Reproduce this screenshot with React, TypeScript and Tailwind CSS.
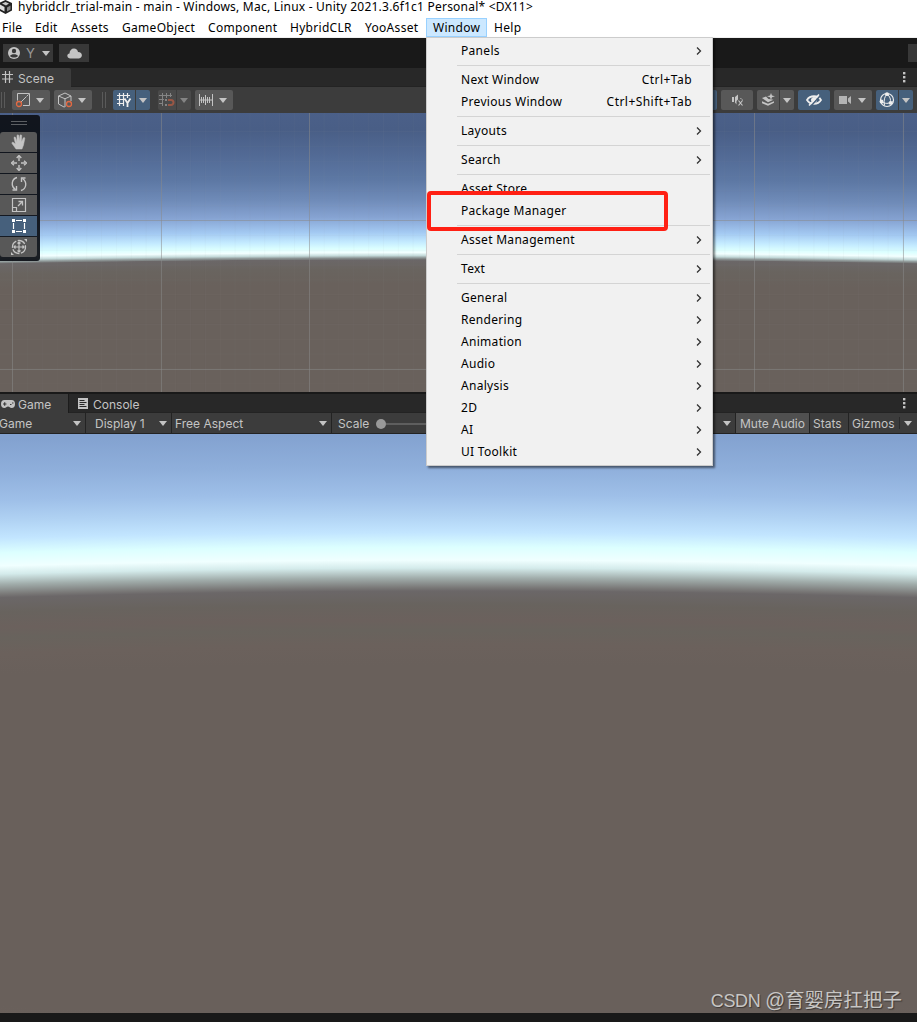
import type { ReactNode } from 'react'
import { clsx } from 'clsx'

type MenuEntry = { label: string; shortcut?: string; sub?: boolean } | null

const MENU_BAR = [
  { label: 'File', width: 'w-[28px] pl-[2px]' },
  { label: 'Edit', width: 'w-[36px] pl-[7px]' },
  { label: 'Assets', width: 'w-[51px] pl-[7px]' },
  { label: 'GameObject', width: 'w-[86px] pl-[7px]' },
  { label: 'Component', width: 'w-[82px] pl-[7px]' },
  { label: 'HybridCLR', width: 'w-[75px] pl-[7px]' },
  { label: 'YooAsset', width: 'w-[68px] pl-[7px]' },
  { label: 'Window', width: 'w-[61px] pl-[6px]', open: true },
  { label: 'Help', width: 'w-[41px] pl-[7px]' },
]

// null is a separator
const WINDOW_MENU: MenuEntry[] = [
  { label: 'Panels', sub: true },
  null,
  { label: 'Next Window', shortcut: 'Ctrl+Tab' },
  { label: 'Previous Window', shortcut: 'Ctrl+Shift+Tab' },
  null,
  { label: 'Layouts', sub: true },
  null,
  { label: 'Search', sub: true },
  null,
  { label: 'Asset Store' },
  { label: 'Package Manager' },
  null,
  { label: 'Asset Management', sub: true },
  null,
  { label: 'Text', sub: true },
  null,
  { label: 'General', sub: true },
  { label: 'Rendering', sub: true },
  { label: 'Animation', sub: true },
  { label: 'Audio', sub: true },
  { label: 'Analysis', sub: true },
  { label: '2D', sub: true },
  { label: 'AI', sub: true },
  { label: 'UI Toolkit', sub: true },
]

function Caret({ className }: { className?: string }) {
  return (
    <svg width="8" height="5" viewBox="0 0 8 5" className={clsx('shrink-0', className)}>
      <path d="M0 0h8L4 5z" fill="currentColor" />
    </svg>
  )
}

function Kebab() {
  return (
    <svg width="4" height="12" viewBox="0 0 4 12" fill="#c4c4c4">
      <rect x="1" y="1" width="2.4" height="2.4" />
      <rect x="1" y="5" width="2.4" height="2.4" />
      <rect x="1" y="9" width="2.4" height="2.4" />
    </svg>
  )
}

function Icon({ children, size = 16 }: { children: ReactNode; size?: number }) {
  return (
    <svg width={size} height={size} viewBox="0 0 16 16" fill="none" stroke="currentColor" className="shrink-0">
      {children}
    </svg>
  )
}

function Grip() {
  return <div className="h-4 w-1 shrink-0 border-x border-[#5a5a5a]" />
}

/* SCENE TOOLBAR BUTTONS */

function ToolButton({ children, className, on }: { children: ReactNode; className?: string; on?: boolean }) {
  return (
    <div
      className={clsx(
        'flex h-5 shrink-0 items-center rounded-[2px]',
        on ? 'bg-[#46607c] text-[#eeeeee]' : 'bg-[#585858] text-[#c4c4c4]',
        className
      )}
    >
      {children}
    </div>
  )
}

function SplitButton({ children, on, dim }: { children: ReactNode; on?: boolean; dim?: boolean }) {
  const bg = on ? 'bg-[#46607c] text-[#eeeeee]' : dim ? 'bg-[#4a4a4a] text-[#848484]' : 'bg-[#585858] text-[#c4c4c4]'
  return (
    <div className="flex h-5 shrink-0 gap-px">
      <div className={clsx('flex items-center justify-center rounded-l-[2px]', dim ? 'w-[18px]' : 'w-[22px]', bg)}>
        {children}
      </div>
      <div className={clsx('flex w-[14px] items-center justify-center rounded-r-[2px]', bg)}>
        <Caret className={on ? 'text-[#c4c4c4]' : ''} />
      </div>
    </div>
  )
}

function SceneToolbar() {
  return (
    <div className="flex h-[26px] shrink-0 items-center justify-between bg-[#3c3c3c]">
      <div className="flex items-center pl-px">
        <Grip />
        <ToolButton className="ml-[7px] w-[38px] justify-between pr-[6px] pl-[3px]">
          <Icon>
            <path d="M2.500 8.500v-7h12v12H8M6 10l5-5M11.500 4.500l2-2" />
            <circle cx="4" cy="12" r="2.500" stroke="#e36a43" strokeWidth="1.300" />
          </Icon>
          <Caret />
        </ToolButton>
        <ToolButton className="ml-1 w-[38px] justify-between pr-[6px] pl-[3px]">
          <Icon>
            <path d="M8.500 14.500L7 15 1.500 12V4L8 1l6 3v5M1.500 4L8 6.800 14 4M8 6.800V14" />
            <circle cx="12" cy="12" r="2.500" stroke="#e36a43" strokeWidth="1.300" />
          </Icon>
          <Caret />
        </ToolButton>
        <div className="mr-[7px] ml-[10px]"><Grip /></div>
        <SplitButton on>
          <Icon>
            <path d="M1 3.500h13M1 7.500h8M1 11.500h7M3.500 1v13M7.500 1v13M11.500 1v5" strokeWidth="1.200" />
            <path d="M8.500 6.500l3 4.500v4M14.500 6.500l-3 4.500" strokeWidth="1.800" />
          </Icon>
        </SplitButton>
        <div className="ml-2">
          <SplitButton dim>
            <Icon>
              <path d="M0 3.500h13M0 7.500h5M0 11.500h4M3.500 1v13M7.500 1v5M11.500 1v4" />
              <path d="M9 8h3a2.500 2.500 0 0 1 0 5H9" stroke="#9a5745" strokeWidth="2" />
              <path d="M6 8h2M6 13h2" strokeWidth="2" />
            </Icon>
          </SplitButton>
        </div>
        <ToolButton className="ml-1 w-[38px] justify-between pr-[6px] pl-[3px]">
          <Icon>
            <path d="M1.500 2v12M14.500 2v12M1 8h14M3.500 5v6M5.500 5v6M7.500 3v10M9.500 5v6M11.500 5v6" />
          </Icon>
          <Caret />
        </ToolButton>
      </div>

      <div className="flex items-center pr-1">
        <ToolButton on className="mr-1 w-[20px]">{null}</ToolButton>
        <ToolButton className="w-8 justify-center">
          <Icon>
            <path d="M3 5h2v5H3zM6 5l3-2.500v5L7.500 9v3.500L6 10.500z" fill="currentColor" stroke="none" />
            <path d="M9.500 8.500l4 5M13.500 8.500l-4 5" strokeWidth="1.200" />
            <path d="M11 6.500c1.500 0 2.500.5 2.500 2" strokeOpacity=".6" />
          </Icon>
        </ToolButton>
        <div className="ml-1">
          <SplitButton>
            <Icon>
              <path d="M2 6l4-1.500L8.500 7l5 .8L8 10.200zM2 9.200l6 2.600 6-2.600v1.600L8 13.800l-6-2.600z" fill="currentColor" stroke="none" />
              <path d="M11 1l1 2.500 3 .8-3 1L11 8l-1-2.700-3-1 3-.8z" fill="currentColor" stroke="none" />
            </Icon>
          </SplitButton>
        </div>
        <ToolButton on className="ml-1 w-8 justify-center">
          <Icon>
            <path d="M1 8c3-5 11-5 14 0-3 5-11 5-14 0z" strokeWidth="1.800" />
            <circle cx="8" cy="8" r="2.500" fill="currentColor" />
            <path d="M4.500 14.500L14 4" stroke="#46607c" strokeWidth="1.600" />
            <path d="M3 13.500L13 2.500" strokeWidth="1.600" />
          </Icon>
        </ToolButton>
        <ToolButton className="ml-1 w-[38px] justify-between pr-[6px] pl-[3px]">
          <Icon>
            <path d="M2 4h8v8H2zM11 6.500l3-2.500v8l-3-2.500z" fill="currentColor" stroke="none" opacity=".85" />
          </Icon>
          <Caret />
        </ToolButton>
        <div className="ml-1">
          <SplitButton on>
            <Icon>
              <circle cx="8" cy="8" r="6.500" strokeWidth="1.200" />
              <path d="M8 2C5.500 5 4.500 8 5.500 13.500M8 2c3 2.500 4 5 3.500 9.500M2.300 9.500c3.500 2.500 7.500 2.500 11.400 0" />
              <circle cx="8" cy="2.200" r="1.900" fill="currentColor" stroke="none" />
              <circle cx="2.500" cy="9.500" r="1.900" fill="currentColor" stroke="none" />
              <circle cx="11.500" cy="10.800" r="1.900" fill="currentColor" stroke="none" />
            </Icon>
          </SplitButton>
        </div>
      </div>
    </div>
  )
}

/* SCENE VIEW */

const TOOLS = [
  {
    name: 'hand',
    icon: (
      <path
        d="M5 15l-4-5.500c-.6-1 .6-1.800 1.500-1L4.500 10 3 4c-.2-1.200 1.200-1.500 1.600-.4L6 7.500V1.700C6 .5 7.700.5 7.800 1.700L8.200 7l.8-5.500c.2-1.100 1.700-.9 1.700.2L10.500 8l1.700-4c.5-1 1.800-.5 1.600.6L12.500 11l-1.500 4z"
        fill="currentColor"
        strokeWidth=".5"
      />
    ),
  },
  {
    name: 'move',
    icon: (
      <>
        <path d="M8 2v4M8 10v4M2 8h4M10 8h4" strokeWidth="1.400" />
        <path d="M5.700 3L8 .5 10.300 3M5.700 13L8 15.500 10.300 13M3 5.700L.5 8 3 10.300M13 5.700L15.500 8 13 10.300" strokeWidth="1.400" />
      </>
    ),
  },
  {
    name: 'rotate',
    icon: (
      <>
        <path d="M4.500 13.500C-.5 10 .5 3 6 1.500M11.500 2.500C16.500 6 15.500 13 10 14.500" strokeWidth="1.400" />
        <path d="M1.500 14h4v-4M14.500 2h-4v4" strokeWidth="1.400" />
      </>
    ),
  },
  {
    name: 'scale',
    icon: (
      <>
        <path d="M1.500 1.500h13v13h-13zM1.500 10.500h4v4" strokeWidth="1.200" />
        <path d="M7 9l4.500-4.500M7.500 4.500h4v4" strokeWidth="1.300" />
      </>
    ),
  },
  {
    name: 'rect',
    icon: (
      <>
        <path d="M5 2.500h6M5 13.500h6M2.500 5v6M13.500 5v6" strokeWidth="1.200" />
        <path d="M1 1h3v3H1zM12 1h3v3h-3zM1 12h3v3H1zM12 12h3v3h-3z" fill="currentColor" stroke="none" />
      </>
    ),
  },
  {
    name: 'transform',
    icon: (
      <>
        <circle cx="8" cy="8" r="6.500" strokeWidth="1.300" strokeDasharray="8 1.500" />
        <path d="M8 3v10M3 8h10M6.500 4.500L8 3l1.500 1.500M6.500 11.500L8 13l1.500-1.500M4.500 6.500L3 8l1.500 1.500M11.500 6.500L13 8l-1.500 1.500" strokeWidth="1.200" />
        <path d="M13 0h3v3zM0 13v3h3z" fill="currentColor" stroke="none" />
      </>
    ),
  },
]

function ToolPalette() {
  return (
    <div className="absolute top-[2px] left-0 h-[146px] w-[40px] rounded-r-[3px] bg-[#0e1117]/95">
      <div className="mt-[6px] ml-[11px] h-[4px] w-4 border-y border-[#5c5f63]" />
      <div className="mt-[7px] flex w-[37px] flex-col gap-px overflow-hidden rounded-[3px]">
        {TOOLS.map(tool => (
          <div
            key={tool.name}
            className={clsx(
              'flex h-5 items-center pl-[11px]',
              tool.name === 'rect' ? 'bg-[#46607c] text-white' : 'bg-[#585858] text-[#c4c4c4]'
            )}
          >
            <Icon>{tool.icon}</Icon>
          </div>
        ))}
      </div>
    </div>
  )
}

function SceneGrid() {
  const minor = Array.from({ length: 62 }, (_, i) => 12.5 + i * 14.84)
  const rows = Array.from({ length: 18 }, (_, i) => 18.500 + i * 14.84)
  return (
    <svg width="917" height="279" className="block" fill="none">
      <g stroke="#9aa0a6" strokeOpacity=".05">
        {minor.map(x => <path key={x} d={`M${x} 0V279`} />)}
        {rows.map(y => <path key={y} d={`M0 ${y}H917`} />)}
      </g>
      <path
        d="M12.500 0V279M161.500 0V279M309.500 0V279M458.500 0V279M606.500 0V279M754.500 0V279M903.500 0V279M0 107.500H917M0 256.500H917"
        stroke="#8a8a8a"
        strokeOpacity=".5"
      />
      <path d="M0 149Q458 142.500 917 149" stroke="#8f9696" strokeOpacity=".4" />
    </svg>
  )
}

function SceneView() {
  return (
    <div className="relative h-[279px] shrink-0 bg-[radial-gradient(ellipse_2500px_250px_at_50%_396.500px,#69615c_90%,#69645f_96%,#6b6768_100%,#7c8080_100.4%,#c4dada_101.6%,#f2ffff_102.800%,#dcffff_104.400%,#c4ebff_107%,#a3c9f2_111%,#86a3d2_117%,#6f8bb8_124%,#5d78a4_132%,#526a95_142%,#495e86_152%,#4b6089_160%)]">
      <SceneGrid />
      <ToolPalette />
    </div>
  )
}

/* GAME VIEW */

function GameToolbar() {
  return (
    <div className="flex h-[21px] shrink-0 justify-between border-b border-[#232323] bg-[#3c3c3c] text-[12px] leading-[21px] text-[#c4c4c4]">
      <div className="flex">
        <div className="flex w-[86px] items-center justify-between border-r border-[#232323] pr-1">
          <span className="-ml-px pt-px">Game</span>
          <Caret />
        </div>
        <div className="flex w-[86px] items-center justify-between border-r border-[#232323] pr-1 pl-[9px]">
          <span className="pt-px">Display 1</span>
          <Caret />
        </div>
        <div className="flex w-[160px] items-center justify-between border-r border-[#232323] pr-1 pl-[3px]">
          <span className="pt-px">Free Aspect</span>
          <Caret />
        </div>
        <div className="flex items-center pl-[6px]">
          <span className="w-[32px] pt-px">Scale</span>
          <div className="mt-px ml-[6px] size-[10px] rounded-full bg-[#999999]" />
          <div className="mt-px h-[2px] w-[120px] bg-[#5e5e5e]" />
        </div>
      </div>
      <div className="flex">
        <div className="flex w-[12px] items-center"><Caret /></div>
        <div className="w-[75px] border-x border-[#232323] bg-[#505050] pl-1 whitespace-nowrap">Mute Audio</div>
        <div className="w-[39px] border-r border-[#232323] pl-[3px]">Stats</div>
        <div className="flex w-[68px] items-center pr-[5px] pl-[3px]">
          <span className="w-[47px] pt-px">Gizmos</span>
          <div className="mr-1 h-3 w-px shrink-0 bg-[#2a2a2a]" />
          <Caret />
        </div>
      </div>
    </div>
  )
}

function GameView() {
  return (
    <div className="flex flex-1 items-end justify-end bg-[radial-gradient(ellipse_2008px_250px_at_50%_406px,#69605b_70%,#6b615c_78%,#68635d_84%,#6b615d_88%,#68635e_94%,#6b6768_99.600%,#7a7978_101%,#a1adab_104.800%,#d4ebeb_108.800%,#f0ffff_112%,#dcffff_117.200%,#c2e5ff_123%,#b0d2f3_130%,#9ebfe8_138%,#8fafdb_149%,#83a2d0_162%)] pr-[15px]">
      <span className="font-['Liberation_Sans','Noto_Sans_CJK_SC',sans-serif] text-[19.500px] leading-[24px] whitespace-nowrap text-[#c8c6c4] [text-shadow:1px_1px_1px_#3c3836]">
        <span className="text-[18px] tracking-[-0.300px]">CSDN </span>@育婴房扛把子
      </span>
    </div>
  )
}

/* WINDOW MENU */

function WindowMenu() {
  return (
    <div className="absolute top-[37px] left-[426px] w-[287px] border border-[#cccccc] bg-[#f1f1f1] py-[2px] shadow-[2px_2px_2px_rgba(0,0,0,0.5)]">
      {WINDOW_MENU.map((entry, i) =>
        entry ? (
          <div key={i} className="flex h-[22px] items-center justify-between pr-[10px] pl-[34px]">
            <span>{entry.label}</span>
            {entry.shortcut && <span className="mr-[10px] tracking-[0.45px]">{entry.shortcut}</span>}
            {entry.sub && (
              <svg width="6" height="8" viewBox="0 0 6 8" fill="none" stroke="#333333" strokeWidth="1.300">
                <path d="M1 .5L4.500 4 1 7.500" />
              </svg>
            )}
          </div>
        ) : (
          <div key={i} className="mr-[2px] ml-[30px] h-[7px] pt-[3px]">
            <div className="h-px bg-[#d4d4d4]" />
          </div>
        )
      )}
    </div>
  )
}

function App() {
  return (
    <div className="relative flex h-[1022px] w-[917px] flex-col overflow-hidden bg-[#191919] font-['Inter',sans-serif]">
      {/* TITLE + MENU BAR */}
      <div className="h-[38px] shrink-0 border-b border-[#f0f0f0] bg-white font-['Noto_Sans',sans-serif] text-[12px] tracking-[0.3px] text-black">
        <div className="flex h-[18px] items-start">
          <svg width="12" height="14" viewBox="0 0 12 14" className="mr-[6px] shrink-0">
            <path d="M0 2.500L5.500 0 12 3v7.500L5.500 14 0 11z" fill="#222222" />
            <path d="M0 4.500L4.500 7v4.500L0 9z" fill="#dddddd" />
            <path d="M7 7.500l3.500-2v4L7 11.500z" fill="#888888" />
            <path d="M2 3.500L5.500 2 9 3.500 6 5.500z" fill="#c9c9c9" />
          </svg>
          <span className="leading-[14px] tracking-[0.220px] whitespace-nowrap">
            hybridclr_trial-main - main - Windows, Mac, Linux - Unity 2021.3.6f1c1 Personal* &lt;DX11&gt;
          </span>
        </div>
        <div className="flex h-[19px]">
          {MENU_BAR.map(item => (
            <div
              key={item.label}
              className={clsx(
                'shrink-0 leading-[19px]',
                item.width,
                item.open && 'bg-[#cce8ff] inset-ring inset-ring-[#99d1ff]'
              )}
            >
              <span className={item.open ? 'pl-px' : ''}>{item.label}</span>
            </div>
          ))}
        </div>
      </div>

      {/* ACCOUNT BAR */}
      <div className="flex h-[30px] shrink-0 items-center justify-between">
        <div className="flex gap-[6px] pl-[3px]">
          <div className="flex h-[18px] w-[50px] items-center bg-[#383838] pl-[5px] text-[12px] text-[#999999]">
            <svg width="12" height="12" viewBox="0 0 12 12">
              <circle cx="6" cy="6" r="6" fill="#c4c4c4" />
              <circle cx="6" cy="4" r="2.200" fill="#383838" />
              <path d="M2 9c1-2.500 7-2.500 8 0-2 2-6 2-8 0z" fill="#383838" />
            </svg>
            <span className="ml-[6px] w-4 pt-px text-[13px]">Y</span>
            <Caret className="text-[#c4c4c4]" />
          </div>
          <div className="flex h-[18px] w-[30px] items-center justify-center bg-[#383838]">
            <svg width="15" height="11" viewBox="0 0 15 11" fill="#c4c4c4">
              <path d="M3 10.500C-.5 10-.5 6 2.500 5.500 2.500 2.500 4.500.5 7 .5c2.200 0 3.600 1.500 4 3.500 5 0 5 6 1 6.500z" />
            </svg>
          </div>
        </div>
        <div className="h-[18px] w-[9px] bg-[#383838]" />
      </div>

      {/* SCENE PANEL */}
      <div className="flex h-[19px] shrink-0 items-center justify-between border-b border-[#232323] bg-[#282828] pr-[11px]">
        <div className="flex h-[19px] w-[71px] items-center rounded-tr-[2px] bg-[#3c3c3c] pl-[2px] text-[12px] text-[#c4c4c4]">
          <svg width="11" height="12" viewBox="0 0 11 12" fill="none" stroke="#c4c4c4" strokeWidth="1.200">
            <path d="M0 3.500h11M0 8h11M3.500 0v12M7.500 0v12" />
          </svg>
          <span className="ml-[5px] pt-[4px] tracking-[0.1px]">Scene</span>
        </div>
        <Kebab />
      </div>
      <SceneToolbar />
      <SceneView />

      {/* GAME PANEL */}
      <div className="mt-[2px] flex h-[19px] shrink-0 items-center justify-between border-b border-[#232323] bg-[#282828] pr-[11px]">
        <div className="flex h-[19px] text-[12px] text-[#c4c4c4]">
          <div className="flex w-[69px] items-center border-r border-[#1c1c1c] bg-[#3c3c3c] pl-px">
            <svg width="14" height="8" viewBox="0 0 14 8" className="mt-[2px]">
              <path d="M3.500 0h7a3.500 4 0 0 1 0 8C9 8 8.500 6.500 7 6.500S5 8 3.500 8a3.500 4 0 0 1 0-8z" fill="#c4c4c4" />
              <path d="M2 4h3.500M3.700 2.200v3.600M9 4.500h1.500M11 3h1.500" stroke="#3c3c3c" strokeWidth="1.200" />
            </svg>
            <span className="ml-[3px] pt-[4px]">Game</span>
          </div>
          <div className="flex items-center pl-[9px]">
            <svg width="10" height="11" viewBox="0 0 10 11">
              <path d="M0 0h10v11H0z" fill="#c4c4c4" />
              <path d="M1.500 2.500h5M1.500 4.500h7M1.500 6.500h5M1.500 8.500h7" stroke="#282828" />
            </svg>
            <span className="ml-[5px] pt-[4px]">Console</span>
          </div>
        </div>
        <Kebab />
      </div>
      <GameToolbar />
      <GameView />
      <div className="h-[9px] shrink-0 bg-[#191919]" />

      <div className="font-['Noto_Sans',sans-serif] text-[12px] tracking-[0.3px] text-black">
        <WindowMenu />
        {/* highlight frame drawn over the menu */}
        <div className="absolute top-[190.500px] left-[427px] h-[40px] w-[240.500px] rounded-[4px] border-4 border-[#ff2014]" />
      </div>
    </div>
  )
}

export default App
